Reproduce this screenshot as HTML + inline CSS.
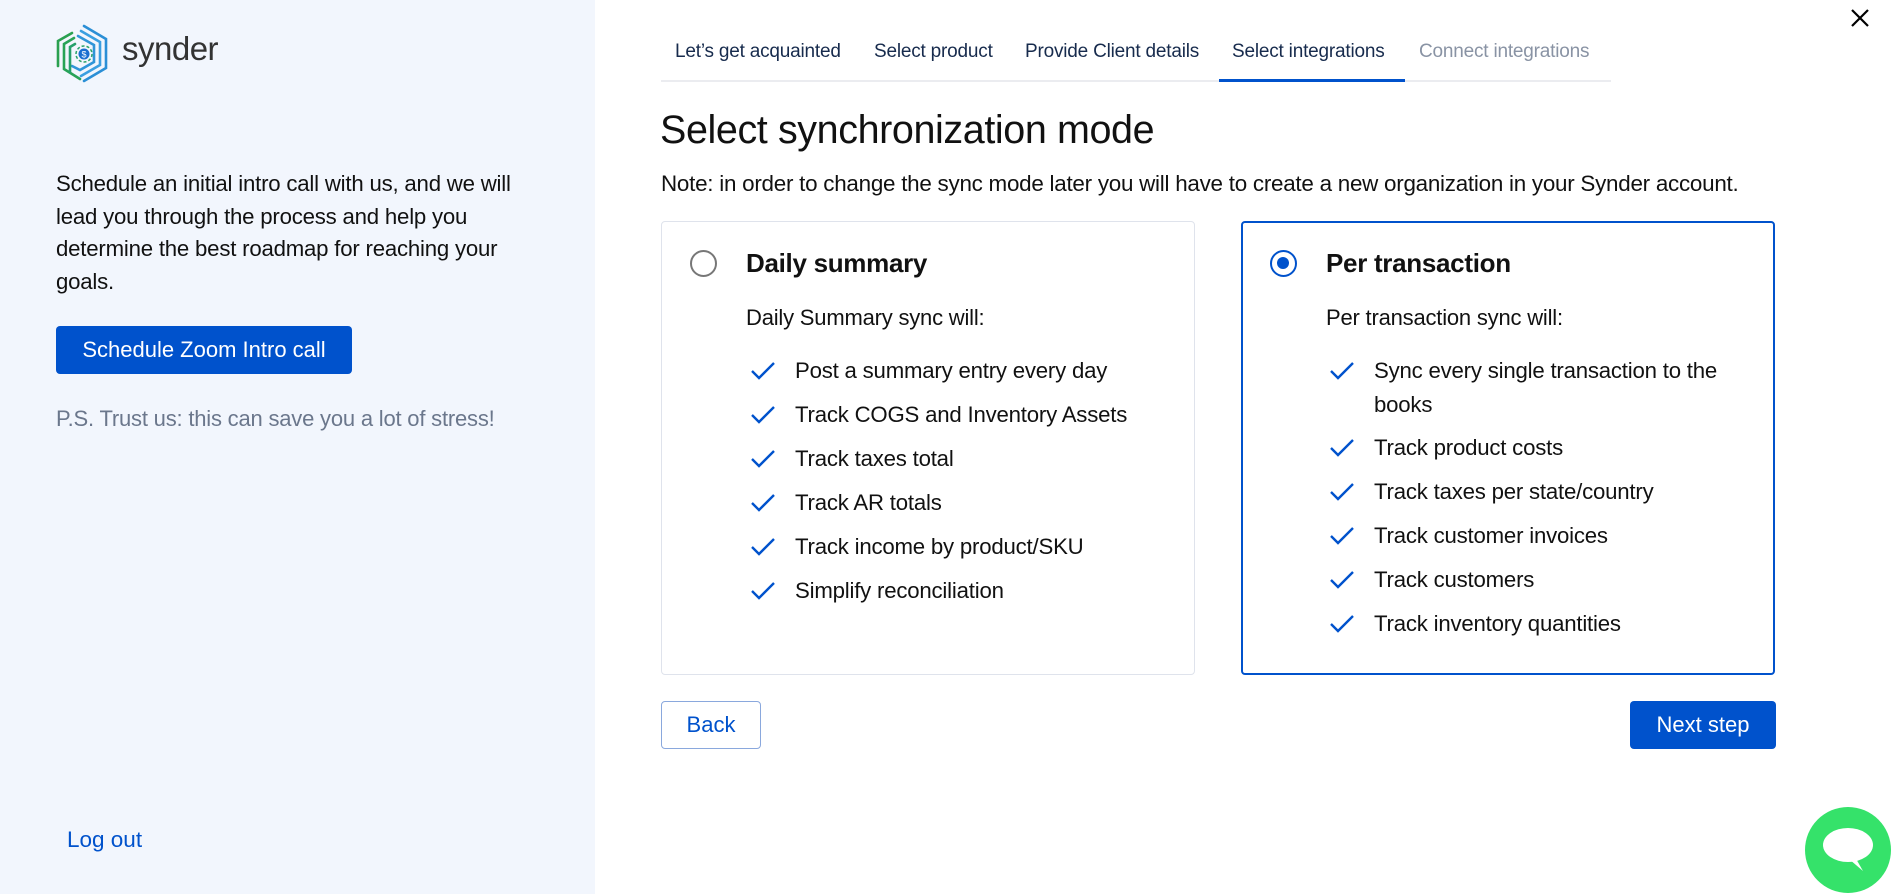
<!DOCTYPE html>
<html><head><meta charset="utf-8"><style>
*{margin:0;padding:0;box-sizing:border-box}
body{width:1892px;height:894px;position:relative;overflow:hidden;background:#fff;font-family:"Liberation Sans",sans-serif;color:#111}
.abs{position:absolute;white-space:nowrap}
.left{position:absolute;left:0;top:0;width:595px;height:894px;background:#f2f6fd}
.p{left:56px;top:168px;font-size:22.2px;line-height:32.6px;color:#111;letter-spacing:-0.2px}
.btn{background:#0052cc;color:#fff;border-radius:4px;font-size:22px;display:flex;align-items:center;justify-content:center}
.tab{top:41px;font-size:19px;color:#172b4d;letter-spacing:-0.2px}
.card{position:absolute;top:221px;width:534px;height:454px;border:1.5px solid #dfe3ec;border-radius:4px}
.card.sel{border:2px solid #0052cc}
.radio{position:absolute;left:28px;top:28px;width:27px;height:27px;border-radius:50%;border:2.5px solid #777}
.sel .radio{border-color:#0052cc}
.sel .radio:after{content:"";position:absolute;left:5px;top:5px;width:12px;height:12px;border-radius:50%;background:#0052cc}
.ct{position:absolute;left:84px;top:26px;font-size:26px;font-weight:bold;letter-spacing:-0.3px}
.sub{position:absolute;left:84px;top:83px;font-size:22px;letter-spacing:-0.2px}
</style></head><body>
<div class="left"></div>
<svg class="abs" style="left:54px;top:22px" width="56" height="64" viewBox="0 0 56 64">
<g fill="none" stroke-width="2.6" stroke-linecap="round">
<path d="M30 4 L52 17 V46 L30 59" stroke="#2b8fd6"/>
<path d="M27 9 L46 20 V43 L27 54" stroke="#3a9fe0"/>
<path d="M24 14 L40 23 V40 L26 48 L18 44" stroke="#2f95d8"/>
<path d="M18 11 L4 19 V44" stroke="#2aa050"/>
<path d="M20 16 L10 22 V47 L26 57" stroke="#28a356"/>
<path d="M21 22 L16 25 V50" stroke="#25a06a"/>
</g>
<circle cx="30" cy="32" r="8" fill="none" stroke="#2aa36a" stroke-width="1.5" stroke-dasharray="3 2"/>
<circle cx="30" cy="32" r="5.5" fill="#1a6fd0"/><text x="30" y="35.5" font-size="9" fill="#fff" text-anchor="middle" font-family="Liberation Sans">$</text>
</svg>
<div class="abs" style="left:122px;top:30px;font-size:33px;color:#333;letter-spacing:-0.5px">synder</div>
<div class="abs p">Schedule an initial intro call with us, and we will<br>lead you through the process and help you<br>determine the best roadmap for reaching your<br>goals.</div>
<div class="abs btn" style="left:56px;top:326px;width:296px;height:48px">Schedule Zoom Intro call</div>
<div class="abs" style="left:56px;top:406px;font-size:22px;color:#6b778c;letter-spacing:-0.2px">P.S. Trust us: this can save you a lot of stress!</div>
<div class="abs" style="left:67px;top:827px;font-size:22.5px;color:#0052cc">Log out</div>

<div class="abs tab" style="left:675px">Let’s get acquainted</div>
<div class="abs tab" style="left:874px">Select product</div>
<div class="abs tab" style="left:1025px">Provide Client details</div>
<div class="abs tab" style="left:1232px">Select integrations</div>
<div class="abs tab" style="left:1419px;color:#8993a4">Connect integrations</div>
<div class="abs" style="left:661px;top:80px;width:950px;height:2px;background:#ebecf0"></div>
<div class="abs" style="left:1219px;top:79px;width:186px;height:3px;background:#0052cc"></div>
<svg class="abs" style="left:1850px;top:8px" width="20" height="20"><path d="M2 2L18 18M18 2L2 18" stroke="#000" stroke-width="2.2"/></svg>

<div class="abs" style="left:660px;top:108px;font-size:39.5px;letter-spacing:-0.4px">Select synchronization mode</div>
<div class="abs" style="left:661px;top:171px;font-size:22.4px;letter-spacing:-0.25px">Note: in order to change the sync mode later you will have to create a new organization in your Synder account.</div>

<div class="card" style="left:661px">
<div class="radio" style="left:28px;top:28px"></div>
<div class="ct">Daily summary</div>
<div class="sub">Daily Summary sync will:</div>
</div>
<div class="card sel" style="left:1241px">
<div class="radio" style="left:27px;top:27px"></div>
<div class="ct" style="left:83px;top:25px">Per transaction</div>
<div class="sub" style="left:83px;top:82px">Per transaction sync will:</div>
</div>
<div id="lists"></div>
<script>
function add(x,items){var h='';items.forEach(function(it){var y=it[1];h+='<svg class="abs" style="left:'+x+'px;top:'+(y-10)+'px" width="26" height="20"><path d="M2 10 L9 17 L24 2" fill="none" stroke="#0052cc" stroke-width="2.4"/></svg><div class="abs" style="left:'+(x+45)+'px;top:'+(y-17)+'px;font-size:22.2px;line-height:33px;letter-spacing:-0.2px">'+it[0]+'</div>';});document.getElementById('lists').insertAdjacentHTML('beforeend',h);}
add(750,[["Post a summary entry every day",371],["Track COGS and Inventory Assets",415],["Track taxes total",459],["Track AR totals",503],["Track income by product/SKU",547],["Simplify reconciliation",591]]);
add(1329,[["Sync every single transaction to the",371],["Track product costs",448],["Track taxes per state/country",492],["Track customer invoices",536],["Track customers",580],["Track inventory quantities",624]]);
</script>
<div class="abs" style="left:1374px;top:388px;font-size:22.2px;line-height:33px;letter-spacing:-0.2px">books</div>

<div class="abs" style="left:661px;top:701px;width:100px;height:48px;border:1px solid #8aa8dd;border-radius:4px;color:#0052cc;font-size:22px;display:flex;align-items:center;justify-content:center">Back</div>
<div class="abs btn" style="left:1630px;top:701px;width:146px;height:48px">Next step</div>

<svg class="abs" style="left:1805px;top:807px" width="87" height="87"><circle cx="43" cy="43" r="43" fill="#35e26a"/><ellipse cx="43" cy="38" rx="25" ry="17" fill="#fff"/><path d="M50 50 L58 64 L44 52Z" fill="#fff"/></svg>
</body></html>
